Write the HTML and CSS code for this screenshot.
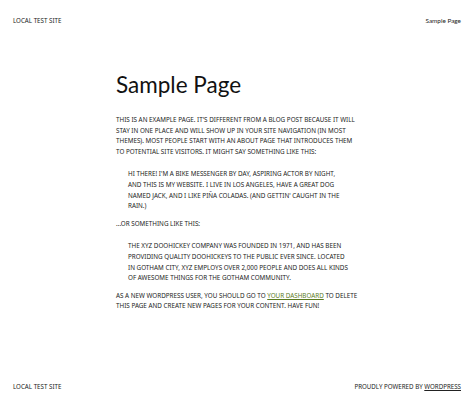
FILE: index.html
```html
<!DOCTYPE html>
<html lang="en">
<head>
<meta charset="utf-8">
<title>Sample Page – Local Test Site</title>
<link rel="stylesheet" href="styles.css">
</head>
<body>
<div class="site">
  <header class="site-header">
    <div class="site-title">LOCAL TEST SITE</div>
    <nav class="site-nav"><a href="#">Sample Page</a></nav>
  </header>
  <main class="content">
    <h1 class="page-title">Sample Page</h1>
    <p>This is an example page. It's different from a blog post because it will stay in one place and will show up in your site navigation (in most themes). Most people start with an About page that introduces them to potential site visitors. It might say something like this:</p>
    <blockquote><p>Hi there! I'm a bike messenger by day, aspiring actor by night,<br>and this is my website. I live in Los Angeles, have a great dog<br>named Jack, and I like piña coladas. (And gettin' caught in the<br>rain.)</p></blockquote>
    <p>...or something like this:</p>
    <blockquote><p>The XYZ Doohickey Company was founded in 1971, and has been<br>providing quality doohickeys to the public ever since. Located<br>in Gotham City, XYZ employs over 2,000 people and does all kinds<br>of awesome things for the Gotham community.</p></blockquote>
    <p>As a new WordPress user, you should go to <a class="link" href="#">your dashboard</a> to delete this page and create new pages for your content. Have fun!</p>
  </main>
  <footer class="site-footer">
    <div class="site-title">LOCAL TEST SITE</div>
    <div class="credit">Proudly powered by <a href="#">WordPress</a></div>
  </footer>
</div>
</body>
</html>
```
FILE: styles.css
```css
html, body {
  margin: 0;
  padding: 0;
  background: #ffffff;
}
body {
  font-family: "Noto Sans", "Open Sans", sans-serif;
  color: #222222;
}
.site {
  min-height: 411px;
  display: flex;
  flex-direction: column;
}
.site-header {
  display: flex;
  justify-content: space-between;
  align-items: center;
  padding: 16px 13px 0 13px;
  font-size: 6.2px;
  line-height: 10px;
}
.site-nav a {
  font-family: "Lato", "Noto Sans", sans-serif;
  font-size: 6.4px;
  color: #222222;
  text-decoration: none;
}
.content {
  width: 242px;
  margin: 0 auto;
  padding-top: 46px;
  font-size: 6.3px;
  line-height: 10.6px;
  text-transform: uppercase;
  flex: 1;
}
.page-title {
  font-family: "Lato", "Noto Sans", sans-serif;
  font-size: 22.5px;
  font-weight: 400;
  line-height: 26px;
  margin: 0 0 17px 0;
  text-transform: none;
  color: #111111;
}
.content p {
  margin: 0 0 7px 0;
}
.content blockquote {
  margin: 12px 0 7px 12px;
}
.link {
  color: #5b7a1e;
  text-decoration: underline;
}
.site-footer {
  display: flex;
  justify-content: space-between;
  align-items: center;
  padding: 0 13px 19px 13px;
  font-size: 6.2px;
  line-height: 10px;
  text-transform: uppercase;
}
.credit a {
  color: #222222;
  text-decoration: underline;
}
```
